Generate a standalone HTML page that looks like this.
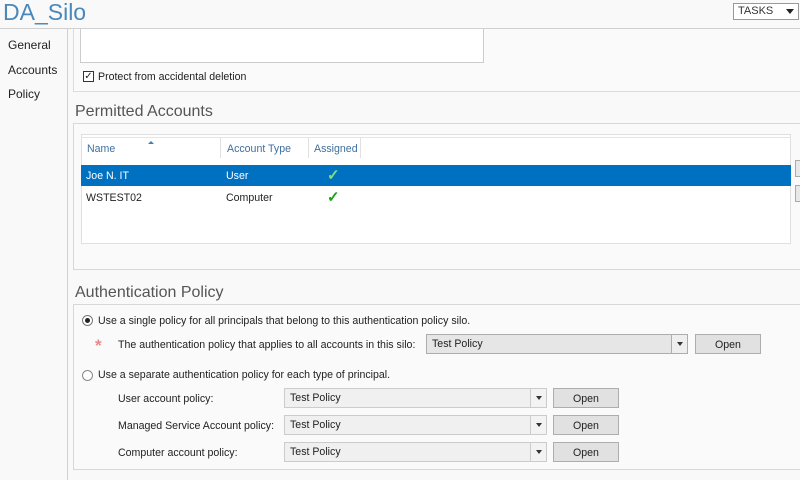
<!DOCTYPE html>
<html><head><meta charset="utf-8"><style>
*{margin:0;padding:0;box-sizing:border-box}
body{width:800px;height:480px;overflow:hidden;background:#f9f9f9;font-family:"Liberation Sans",sans-serif;font-size:10.6px;color:#222;position:relative}
.a{position:absolute}
.t{position:absolute;white-space:nowrap}
.h{font-size:16px;color:#555}
.dd{position:absolute;background:#e6e6e6;border:1px solid #adadad;height:20px;padding:3px 0 0 5px}
.dd .ar{position:absolute;right:0;top:0;width:16px;height:18px;border-left:1px solid #adadad;background:#eee}
.dd .ar:after{content:"";position:absolute;left:5px;top:7px;border:3px solid transparent;border-top:4px solid #333}
.btn{position:absolute;background:#e1e1e1;border:1px solid #adadad;height:20px;text-align:center;padding-top:4px}
.dis{background:#f0f0f0;border-color:#ccc}
</style></head><body>
<div class="t" style="left:3px;top:-1px;font-size:23px;color:#4a88ba">DA_Silo</div>
<div class="a" style="left:733px;top:3px;width:66px;height:17px;border:1px solid #999;background:#fff"></div>
<div class="t" style="left:738px;top:5px;font-size:11px;color:#333">TASKS</div>
<div class="a" style="left:786px;top:9px;border:4px solid transparent;border-top:5px solid #222"></div>
<div class="a" style="left:0;top:28px;width:800px;height:1px;background:#d0d0d0"></div>
<div class="a" style="left:67px;top:29px;width:1px;height:451px;background:#d0d0d0"></div>
<div class="t" style="left:8px;top:38px;font-size:12px">General</div>
<div class="t" style="left:8px;top:63px;font-size:12px">Accounts</div>
<div class="t" style="left:8px;top:87px;font-size:12px">Policy</div>
<div class="a" style="left:73px;top:29px;width:727px;height:63px;border:1px solid #dcdcdc;border-top:0;border-right:0;background:#fafafa"></div>
<div class="a" style="left:80px;top:29px;width:404px;height:34px;border:1px solid #ccc;border-top:0;background:#fff"></div>
<div class="a" style="left:83px;top:71px;width:11px;height:11px;border:1px solid #333;background:#fff;font-size:10px;line-height:9px;text-align:center">✓</div>
<div class="t" style="left:98px;top:71px">Protect from accidental deletion</div>
<div class="t h" style="left:75px;top:103px">Permitted Accounts</div>
<div class="a" style="left:73px;top:123px;width:727px;height:147px;border:1px solid #d8d8d8;border-right:0;background:#fafafa"></div>
<div class="a" style="left:81px;top:134px;width:710px;height:110px;border:1px solid #e0e0e0;background:#fff"></div>
<div class="a" style="left:81px;top:137px;width:710px;height:1px;background:#e5e5e5"></div>
<div class="a" style="left:220px;top:138px;width:1px;height:20px;background:#e0e0e0"></div>
<div class="a" style="left:308px;top:138px;width:1px;height:20px;background:#e0e0e0"></div>
<div class="a" style="left:360px;top:138px;width:1px;height:20px;background:#e0e0e0"></div>
<div class="a" style="left:148px;top:138px;border:3px solid transparent;border-bottom:3px solid #3f7fb5"></div>
<div class="t" style="left:87px;top:143px;color:#3f6f9f">Name</div>
<div class="t" style="left:227px;top:143px;color:#3f6f9f">Account Type</div>
<div class="t" style="left:314px;top:143px;color:#3f6f9f">Assigned</div>
<div class="a" style="left:81px;top:165px;width:710px;height:21px;background:#0070c0"></div>
<div class="t" style="left:86px;top:170px;color:#fff">Joe N. IT</div>
<div class="t" style="left:226px;top:170px;color:#fff">User</div>
<div class="t" style="left:327px;top:166px;color:#7fe07f;font-size:15px;font-weight:bold">✓</div>
<div class="t" style="left:86px;top:192px">WSTEST02</div>
<div class="t" style="left:226px;top:192px">Computer</div>
<div class="t" style="left:327px;top:188px;color:#1aa01a;font-size:15px;font-weight:bold">✓</div>
<div class="a" style="left:795px;top:160px;width:8px;height:17px;border:1px solid #aaa;background:#e8e8e8"></div>
<div class="a" style="left:795px;top:185px;width:8px;height:17px;border:1px solid #aaa;background:#e8e8e8"></div>
<div class="t h" style="left:75px;top:284px">Authentication Policy</div>
<div class="a" style="left:73px;top:304px;width:727px;height:166px;border:1px solid #d8d8d8;border-right:0;background:#fafafa"></div>
<div class="a" style="left:82px;top:315px;width:11px;height:11px;border:1px solid #777;border-radius:50%;background:#fff"></div>
<div class="a" style="left:85px;top:318px;width:5px;height:5px;border-radius:50%;background:#222"></div>
<div class="t" style="left:98px;top:315px">Use a single policy for all principals that belong to this authentication policy silo.</div>
<div class="t" style="left:95px;top:336px;color:#e88;font-size:17px;font-weight:bold">*</div>
<div class="t" style="left:118px;top:339px">The authentication policy that applies to all accounts in this silo:</div>
<div class="dd" style="left:426px;top:334px;width:262px">Test Policy<div class="ar"></div></div>
<div class="btn" style="left:695px;top:334px;width:66px">Open</div>
<div class="a" style="left:82px;top:370px;width:11px;height:11px;border:1px solid #888;border-radius:50%;background:#fff"></div>
<div class="t" style="left:98px;top:369px">Use a separate authentication policy for each type of principal.</div>
<div class="t" style="left:118px;top:393px">User account policy:</div>
<div class="t" style="left:118px;top:420px">Managed Service Account policy:</div>
<div class="t" style="left:118px;top:447px">Computer account policy:</div>
<div class="dd dis" style="left:284px;top:388px;width:263px">Test Policy<div class="ar" style="border-color:#ccc;background:#f3f3f3"></div></div>
<div class="dd dis" style="left:284px;top:415px;width:263px">Test Policy<div class="ar" style="border-color:#ccc;background:#f3f3f3"></div></div>
<div class="dd dis" style="left:284px;top:442px;width:263px">Test Policy<div class="ar" style="border-color:#ccc;background:#f3f3f3"></div></div>
<div class="btn" style="left:553px;top:388px;width:66px">Open</div>
<div class="btn" style="left:553px;top:415px;width:66px">Open</div>
<div class="btn" style="left:553px;top:442px;width:66px">Open</div>
</body></html>
